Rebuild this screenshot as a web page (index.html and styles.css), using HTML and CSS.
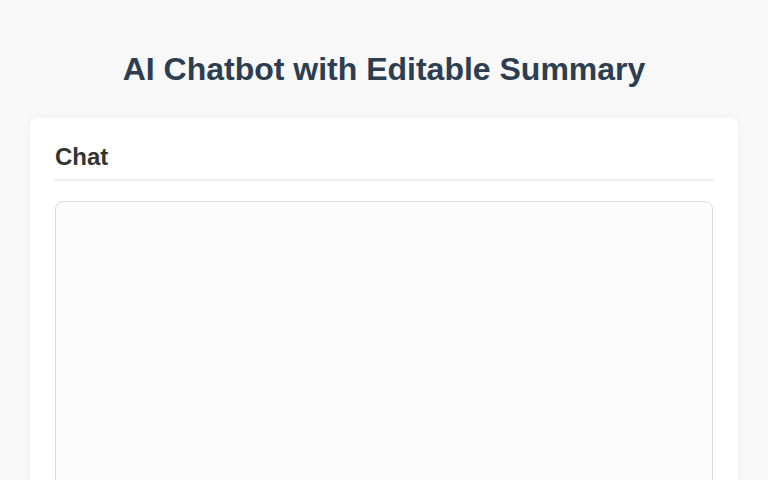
FILE: index.html
```html
<!DOCTYPE html>
<html lang="en">
<head>
<meta charset="utf-8">
<title>AI Chatbot with Editable Summary</title>
<link rel="stylesheet" href="styles.css">
</head>
<body>
<h1 class="page-title">AI Chatbot with Editable Summary</h1>
<main class="container">
  <section class="card">
    <h2 class="card-title">Chat</h2>
    <div class="chat-box"></div>
  </section>
</main>
</body>
</html>
```
FILE: styles.css
```css
html, body {
  margin: 0;
  padding: 0;
}
body {
  background: #f8f8f8;
  font-family: "Liberation Sans", Arial, sans-serif;
  color: #333;
  padding: 30px;
}
.page-title {
  font-size: 32px;
  font-weight: bold;
  color: #2c3e50;
  text-align: center;
  margin: 21px 0 30px;
}
.container {
  display: flex;
  flex-direction: column;
}
.card {
  background: #fff;
  border-radius: 8px;
  box-shadow: 0 2px 10px rgba(0, 0, 0, 0.05);
  padding: 25px;
}
.card-title {
  font-size: 24px;
  font-weight: bold;
  color: #333;
  margin: 0 0 20px;
  padding-bottom: 8px;
  border-bottom: 2px solid #eee;
}
.chat-box {
  height: 400px;
  border: 1px solid #ddd;
  border-radius: 8px;
  background: #fcfcfc;
}
```
